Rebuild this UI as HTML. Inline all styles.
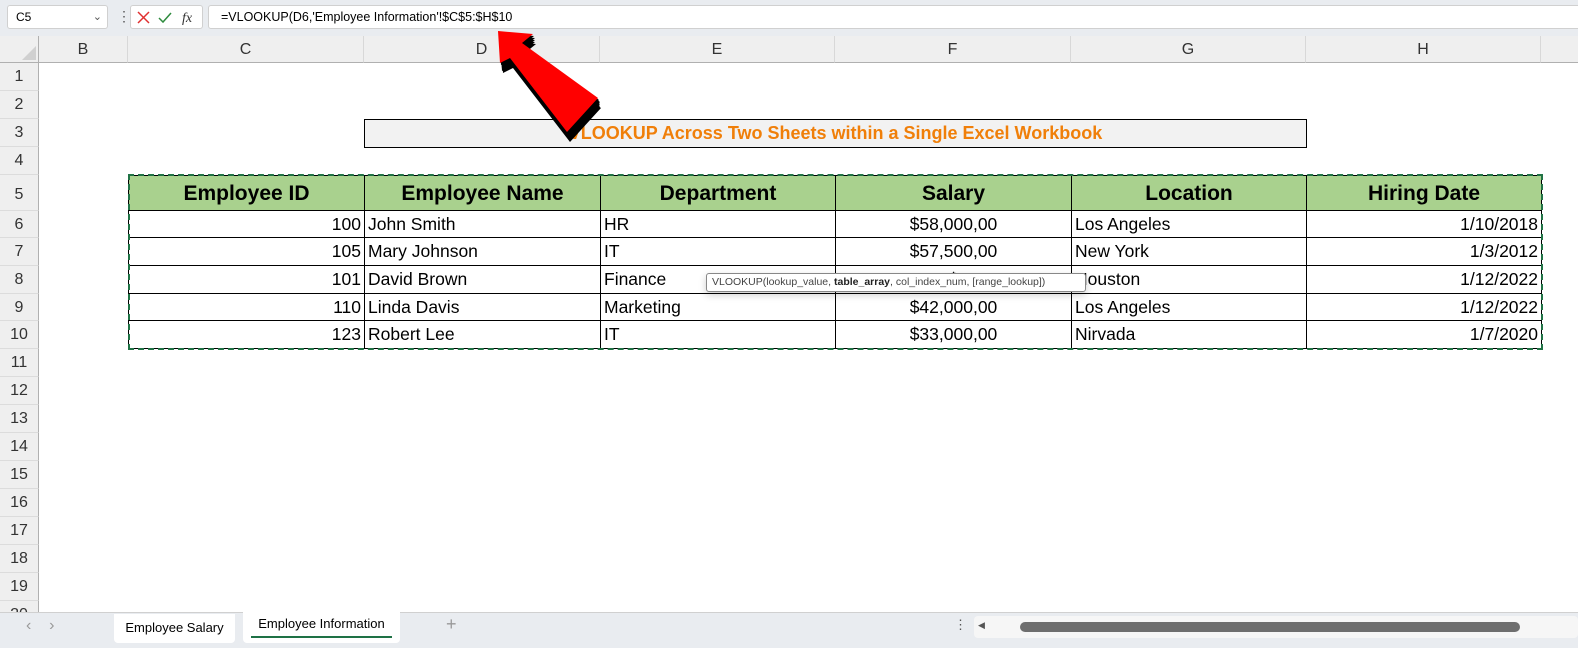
<!DOCTYPE html>
<html><head><meta charset="utf-8"><style>
*{margin:0;padding:0;box-sizing:border-box}
body{width:1578px;height:648px;overflow:hidden;background:#fff;font-family:"Liberation Sans",sans-serif;position:relative}
.a{position:absolute}
.top{left:0;top:0;width:1578px;height:36px;background:#e9ecf0}
.ch{top:36px;height:27px;background:#efefef;border-bottom:1px solid #b0b0b0;border-right:1px solid #d8d8d8;font-size:16px;color:#333;text-align:center;line-height:27px}
.rh{left:0;width:39px;background:#efefef;border-right:1px solid #b0b0b0;border-bottom:1px solid #dcdcdc;font-size:16px;color:#333;text-align:center}
.c{font-size:17.5px;line-height:27px;color:#000;padding:0 3px;white-space:nowrap;overflow:hidden;border-right:1px solid #000;border-bottom:1px solid #000}
.h{font-size:21px;font-weight:bold;text-align:center;background:#a9d18e;line-height:35px}
.r{text-align:right}.m{text-align:center}
</style></head><body>
<div class="a top"></div>
<div class="a" style="left:7px;top:5px;width:101px;height:24px;background:#fff;border:1px solid #d0d0d0;border-radius:3px;font-size:12px;line-height:22px;padding-left:8px">C5<span style="position:absolute;right:5px;top:0;font-size:11px;color:#555">&#8964;</span></div>
<div class="a" style="left:117px;top:8px;font-size:14px;color:#555">&#8942;</div>
<div class="a" style="left:130px;top:5px;width:73px;height:24px;background:#fff;border:1px solid #d0d0d0;border-radius:3px"></div>
<svg class="a" style="left:136px;top:10px" width="64" height="16"><path d="M2 2L13 13M13 2L2 13" stroke="#e03030" stroke-width="1.5"/><path d="M23 8L27 12L35 3" stroke="#2e8b3e" stroke-width="1.5" fill="none"/><text x="46" y="12" font-family="Liberation Serif" font-style="italic" font-size="14" fill="#333">fx</text></svg>
<div class="a" style="left:208px;top:5px;width:1380px;height:24px;background:#fff;border:1px solid #d0d0d0;border-radius:3px;font-size:12.5px;line-height:22px;padding-left:12px">=VLOOKUP(D6,'Employee Information'!$C$5:$H$10</div>
<div class="a" style="left:0;top:36px;width:39px;height:27px;background:#efefef;border-right:1px solid #b0b0b0;border-bottom:1px solid #b0b0b0"></div>
<svg class="a" style="left:22px;top:46px" width="14" height="14"><path d="M14 0L14 14L0 14Z" fill="#d0d0d0"/></svg>
<div class="a ch" style="left:39px;width:89px">B</div>
<div class="a ch" style="left:128px;width:236px">C</div>
<div class="a ch" style="left:364px;width:236px">D</div>
<div class="a ch" style="left:600px;width:235px">E</div>
<div class="a ch" style="left:835px;width:236px">F</div>
<div class="a ch" style="left:1071px;width:235px">G</div>
<div class="a ch" style="left:1306px;width:235px">H</div>
<div class="a ch" style="left:1541px;width:40px"></div>
<div class="a rh" style="top:63px;height:28px;line-height:28px">1</div>
<div class="a rh" style="top:91px;height:28px;line-height:28px">2</div>
<div class="a rh" style="top:119px;height:28px;line-height:28px">3</div>
<div class="a rh" style="top:147px;height:28px;line-height:28px">4</div>
<div class="a rh" style="top:175px;height:36px;line-height:40px">5</div>
<div class="a rh" style="top:211px;height:27px;line-height:28px">6</div>
<div class="a rh" style="top:238px;height:28px;line-height:28px">7</div>
<div class="a rh" style="top:266px;height:28px;line-height:28px">8</div>
<div class="a rh" style="top:294px;height:27px;line-height:28px">9</div>
<div class="a rh" style="top:321px;height:28px;line-height:28px">10</div>
<div class="a rh" style="top:349px;height:28px;line-height:28px">11</div>
<div class="a rh" style="top:377px;height:28px;line-height:28px">12</div>
<div class="a rh" style="top:405px;height:28px;line-height:28px">13</div>
<div class="a rh" style="top:433px;height:28px;line-height:28px">14</div>
<div class="a rh" style="top:461px;height:28px;line-height:28px">15</div>
<div class="a rh" style="top:489px;height:28px;line-height:28px">16</div>
<div class="a rh" style="top:517px;height:28px;line-height:28px">17</div>
<div class="a rh" style="top:545px;height:28px;line-height:28px">18</div>
<div class="a rh" style="top:573px;height:28px;line-height:28px">19</div>
<div class="a rh" style="top:601px;height:28px;line-height:28px">20</div>
<div class="a" style="left:364px;top:119px;width:943px;height:29px;background:#f2f2f2;border:1px solid #000;color:#f07f09;font-weight:bold;font-size:18px;text-align:center;line-height:27px;padding-left:0">VLOOKUP Across Two Sheets within a Single Excel Workbook</div>
<div class="a" style="left:128px;top:175px;width:1414px;height:175px;border-left:1px solid #000;border-top:1px solid #000">
<div style="display:grid;grid-template-columns:236px 236px 235px 236px 235px 235px;grid-template-rows:35px 27px 28px 28px 27px 28px">
<div class="c h">Employee ID</div><div class="c h">Employee Name</div><div class="c h">Department</div><div class="c h">Salary</div><div class="c h">Location</div><div class="c h">Hiring Date</div>
<div class="c r">100</div><div class="c">John Smith</div><div class="c">HR</div><div class="c m">$58,000,00</div><div class="c">Los Angeles</div><div class="c r">1/10/2018</div>
<div class="c r">105</div><div class="c">Mary Johnson</div><div class="c">IT</div><div class="c m">$57,500,00</div><div class="c">New York</div><div class="c r">1/3/2012</div>
<div class="c r">101</div><div class="c">David Brown</div><div class="c">Finance</div><div class="c m">$</div><div class="c">Houston</div><div class="c r">1/12/2022</div>
<div class="c r">110</div><div class="c">Linda Davis</div><div class="c">Marketing</div><div class="c m">$42,000,00</div><div class="c">Los Angeles</div><div class="c r">1/12/2022</div>
<div class="c r">123</div><div class="c">Robert Lee</div><div class="c">IT</div><div class="c m">$33,000,00</div><div class="c">Nirvada</div><div class="c r">1/7/2020</div>
</div></div>
<div class="a" style="left:128px;top:174px;width:1415px;height:176px;border:2px dashed #217346"></div>
<div class="a" style="left:706px;top:273px;width:380px;height:19px;background:#fff;border:1px solid #888;border-radius:3px;box-shadow:0 3px 8px rgba(0,0,0,.2);font-size:10.5px;line-height:17px;color:#444;padding-left:5px;white-space:nowrap">VLOOKUP(lookup_value, <b style="color:#222">table_array</b>, col_index_num, [range_lookup])</div>
<svg class="a" style="left:0;top:0" width="700" height="160">
<g fill="#000">
<polygon transform="translate(1,2)" points="498,31 533,34 522,43 598,98 567,132 510,58 500,63"/>
<polygon transform="translate(2,4)" points="498,31 533,34 522,43 598,98 567,132 510,58 500,63"/>
<polygon transform="translate(2,6)" points="498,31 533,34 522,43 598,98 567,132 510,58 500,63"/>
<polygon transform="translate(2,8)" points="498,31 533,34 522,43 598,98 567,132 510,58 500,63"/>
<polygon transform="translate(3,10)" points="498,31 533,34 522,43 598,98 567,132 510,58 500,63"/>
</g>
<polygon points="498,31 533,34 522,43 598,98 567,132 510,58 500,63" fill="#ff0000"/>
</svg>
<div class="a" style="left:0;top:612px;width:1578px;height:36px;background:#e9ecf0;border-top:1px solid #d0d0d0"></div>
<div class="a" style="left:26px;top:617px;font-size:16px;color:#999">&#8249;&nbsp;&nbsp;&nbsp;&nbsp;&#8250;</div>
<div class="a" style="left:114px;top:614px;width:121px;height:29px;background:#fff;border-radius:0 0 4px 4px;font-size:13px;line-height:28px;text-align:center">Employee Salary</div>
<div class="a" style="left:243px;top:612px;width:157px;height:31px;background:#fff;border-radius:0 0 4px 4px;font-size:13px;line-height:24px;text-align:center;color:#000">Employee Information<div style="position:absolute;left:8px;right:8px;bottom:5px;height:2px;background:#1e7145"></div></div>
<div class="a" style="left:446px;top:614px;font-size:18px;color:#999">+</div>
<div class="a" style="left:954px;top:617px;font-size:13px;color:#555">&#8942;</div>
<div class="a" style="left:974px;top:616px;width:604px;height:22px;background:#f6f6f6;border-radius:4px"></div>
<div class="a" style="left:978px;top:620px;font-size:9px;color:#555">&#9664;</div>
<div class="a" style="left:1020px;top:622px;width:500px;height:10px;background:#6e6e6e;border-radius:5px"></div>
</body></html>
